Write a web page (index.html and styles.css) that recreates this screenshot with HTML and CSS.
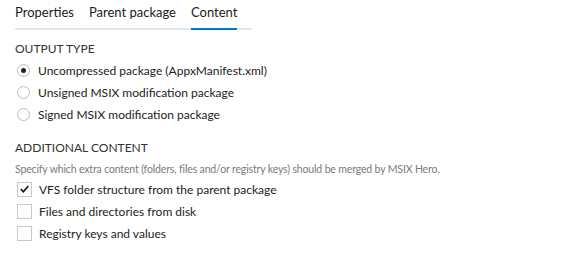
FILE: index.html
```html
<!DOCTYPE html>
<html>
<head>
<meta charset="utf-8">
<link rel="stylesheet" href="styles.css">
</head>
<body>
<div class="page">
  <div class="tabs">
    <div class="tab">Properties</div>
    <div class="tab">Parent package</div>
    <div class="tab active">Content</div>
  </div>

  <div class="section">
    <div class="heading">OUTPUT TYPE</div>
    <div class="options">
      <div class="option"><span class="radio checked"></span><span>Uncompressed package (AppxManifest.xml)</span></div>
      <div class="option"><span class="radio"></span><span>Unsigned MSIX modification package</span></div>
      <div class="option"><span class="radio"></span><span>Signed MSIX modification package</span></div>
    </div>
  </div>

  <div class="section second">
    <div class="heading">ADDITIONAL CONTENT</div>
    <div class="hint">Specify which extra content (folders, files and/or registry keys) should be merged by MSIX Hero.</div>
    <div class="options checks">
      <div class="option"><span class="check checked"><svg viewBox="0 0 14 14" width="14" height="14"><path d="M3 7.2 L5.8 10 L11 3.8" fill="none" stroke="#1a1a1a" stroke-width="1.9"/></svg></span><span>VFS folder structure from the parent package</span></div>
      <div class="option"><span class="check"></span><span>Files and directories from disk</span></div>
      <div class="option"><span class="check"></span><span>Registry keys and values</span></div>
    </div>
  </div>
</div>
</body>
</html>
```

FILE: styles.css
```css
html, body {
  margin: 0;
  padding: 0;
  background: #ffffff;
}
body {
  font-family: "Lato", "Open Sans", sans-serif;
  font-size: 12px;
  color: #222222;
}
.page {
  padding: 0 15px;
}
.tabs {
  display: inline-flex;
  border-bottom: 2px solid #e1e7ef;
  padding-top: 2px;
}
.tab {
  font-size: 13px;
  line-height: 20px;
  margin-right: 15px;
  padding-bottom: 6px;
  border-bottom: 2px solid transparent;
  margin-bottom: -2px;
  color: #1a1a1a;
}
.tab.active {
  border-bottom-color: #0078d4;
}
.section {
  margin-top: 10px;
}
.section.second {
  margin-top: 14px;
}
.heading {
  font-size: 12px;
  line-height: 18px;
  color: #333333;
}
.options {
  display: flex;
  flex-direction: column;
  margin-top: 1px;
}
.option {
  display: flex;
  align-items: center;
  height: 22px;
  gap: 8px;
}
.radio {
  width: 11px;
  height: 11px;
  border: 1px solid #bdbdbd;
  border-radius: 50%;
  margin-left: 2px;
  box-sizing: content-box;
  position: relative;
  flex: none;
}
.radio.checked::after {
  content: "";
  position: absolute;
  left: 3px;
  top: 3px;
  width: 5px;
  height: 5px;
  border-radius: 50%;
  background: #222222;
}
.hint {
  color: #7a7a7a;
  font-size: 10.5px;
  letter-spacing: -0.15px;
  line-height: 18px;
  margin-top: 3px;
}
.checks {
  margin-top: 0;
}
.checks .option {
  gap: 7px;
}
.check {
  width: 13px;
  height: 13px;
  border: 1px solid #c8c8c8;
  margin-left: 2px;
  flex: none;
  display: flex;
  align-items: center;
  justify-content: center;
}
```
